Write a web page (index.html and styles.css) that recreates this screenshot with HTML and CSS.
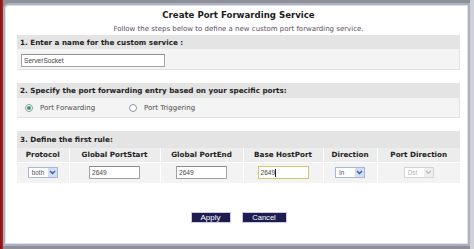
FILE: index.html
```html
<!DOCTYPE html>
<html lang="en">
<head>
    <meta charset="UTF-8">
    <title>Create Port Forwarding Service</title>
    <link rel="stylesheet" href="styles.css">
</head>
<body>
    <div class="panel">
        <h1 class="title">Create Port Forwarding Service</h1>
        <p class="intro">Follow the steps below to define a new custom port forwarding service.</p>

        <div class="step step1">
            <div class="step-head">1. Enter a name for the custom service :</div>
            <div class="step-body">
                <div class="field name-field">ServerSocket</div>
            </div>
        </div>

        <div class="step step2">
            <div class="step-head">2. Specify the port forwarding entry based on your specific ports:</div>
            <div class="step-body radios">
                <label class="radio"><span class="dot checked"></span>Port Forwarding</label>
                <label class="radio"><span class="dot"></span>Port Triggering</label>
            </div>
        </div>

        <div class="step step3">
            <div class="step-head">3. Define the first rule:</div>
            <table class="rules">
                <tr>
                    <th class="c1">Protocol</th>
                    <th class="c2">Global PortStart</th>
                    <th class="c3">Global PortEnd</th>
                    <th class="c4">Base HostPort</th>
                    <th class="c5">Direction</th>
                    <th class="c6">Port Direction</th>
                </tr>
                <tr>
                    <td><div class="sel"><span>both</span><i class="arr"><svg width="7" height="5" viewBox="0 0 7 5"><path d="M1 1 L3.5 3.5 L6 1" fill="none" stroke="#2a5fb0" stroke-width="1.4"/></svg></i></div></td>
                    <td><div class="field port">2649</div></td>
                    <td><div class="field port">2649</div></td>
                    <td><div class="field port focus">2649<span class="caret"></span></div></td>
                    <td><div class="sel"><span>In</span><i class="arr"><svg width="7" height="5" viewBox="0 0 7 5"><path d="M1 1 L3.5 3.5 L6 1" fill="none" stroke="#2a5fb0" stroke-width="1.4"/></svg></i></div></td>
                    <td><div class="sel off"><span>Dst</span><i class="arr"><svg width="7" height="5" viewBox="0 0 7 5"><path d="M1 1 L3.5 3.5 L6 1" fill="none" stroke="#b8b8b8" stroke-width="1.2"/></svg></i></div></td>
                </tr>
            </table>
        </div>

        <div class="actions">
            <button class="btn apply">Apply</button>
            <button class="btn cancel">Cancel</button>
        </div>
    </div>
</body>
</html>
```

FILE: styles.css
```css
*{box-sizing: border-box;}
html, body{
    margin: 0;
    padding: 0;
}
body{
    width: 474px;
    height: 249px;
    overflow: hidden;
    padding: 3px 4px 3px 3px;
    background: linear-gradient(to right, #7e1414 0, #b32222 3px, #8e9096 3px, #8e9096 470px, #cfd1d6 470px);
    font-family: "DejaVu Sans", Verdana, sans-serif;
    color: #333;
}
.panel{
    height: 243px;
    background: #fff;
    border: 2px solid #a9b2c4;
    border-radius: 6px 0 0 0;
    box-shadow: inset 0 0 0 1px #dde2ea;
    padding: 0 8px 0 12px;
}
.title{
    margin: 0;
    padding-top: 4px;
    height: 16px;
    line-height: 12px;
    font-size: 8.6px;
    font-weight: bold;
    text-align: center;
    color: #1c1c1c;
}
.intro{
    margin: 3px 0 0 0;
    height: 11px;
    line-height: 10px;
    font-size: 7px;
    text-align: center;
    color: #5d4b63;
}
.step-head{
    background: #e4e4e4;
    padding-left: 3px;
    font-size: 7.2px;
    font-weight: bold;
    color: #1e1e1e;
}
.step-body{
    background: #f4f4f4;
    border-right: 1px solid #e2e2e2;
    border-bottom: 1px solid #e2e2e2;
}
.step1 .step-head{
    height: 14px;
    line-height: 15px;
}
.step1 .step-body{
    height: 21px;
    padding: 5px 0 0 4px;
}
.step2{
    margin-top: 13px;
}
.step2 .step-head{
    height: 15px;
    line-height: 15px;
}
.step3{
    margin-top: 13px;
}
.step3 .step-head{
    height: 17px;
    line-height: 17px;
}

.field{
    background: #fff;
    border: 1px solid #a3a3a3;
    border-top-color: #8c8c8c;
    font-family: "Liberation Sans", Arial, sans-serif;
    font-size: 6.6px;
    color: #444;
    padding-left: 2px;
}
.name-field{
    width: 144px;
    height: 13px;
    line-height: 11px;
}

.radios{
    display: flex;
    align-items: center;
    height: 20px;
    padding-left: 8px;
}
.radio{
    display: flex;
    align-items: center;
    font-size: 7px;
    color: #4a4a4a;
}
.radio + .radio{
    margin-left: 34px;
}
.dot{
    width: 8px;
    height: 8px;
    border: 1px solid #8d98a4;
    border-radius: 50%;
    background: #fff;
    margin-right: 7px;
    display: flex;
    align-items: center;
    justify-content: center;
}
.dot.checked::after{
    content: "";
    width: 4px;
    height: 4px;
    border-radius: 50%;
    background: #3c9a63;
}

.rules{
    width: 443px;
    border-collapse: collapse;
    table-layout: fixed;
}
.rules th, .rules td{
    border: 1px solid #fff;
    text-align: center;
    padding: 0;
}
.rules tr:first-child th{border-top: none;}
.rules th:first-child, .rules td:first-child{border-left: none;}
.rules th:last-child, .rules td:last-child{border-right: none;}
.rules tr:last-child td{border-bottom: none;}
.rules th{
    height: 14px;
    background: #ececec;
    font-size: 7.2px;
    font-weight: bold;
    color: #222;
}
.rules td{
    height: 21px;
    background: #f3f3f3;
}
.c1{width: 52px;}
.c2{width: 91px;}
.c3{width: 83px;}
.c4{width: 80px;}
.c5{width: 54px;}
.c6{width: 83px;}

.port{
    width: 51px;
    height: 13px;
    line-height: 11px;
    margin: 0 auto;
    text-align: left;
}
.focus{
    border: 1px solid #d6c374;
    display: flex;
    align-items: center;
}
.caret{
    display: inline-block;
    width: 1px;
    height: 8px;
    background: #222;
}

.sel{
    width: 30px;
    height: 11px;
    margin: 0 auto;
    background: #fff;
    border: 1px solid #a8b8d0;
    display: flex;
    align-items: center;
    justify-content: space-between;
    font-family: "Liberation Sans", Arial, sans-serif;
    font-size: 6.4px;
    color: #555;
    padding-left: 3px;
}
.arr{
    width: 9px;
    height: 9px;
    background: #d3def2;
    display: flex;
    align-items: center;
    justify-content: center;
}
.sel.off{
    border-color: #d4d4d4;
    color: #b4b4b4;
}
.sel.off .arr{
    background: #efefef;
}

.actions{
    display: flex;
    justify-content: center;
    gap: 11px;
    margin-top: 29px;
}
.btn{
    height: 11px;
    padding: 0;
    background: #1d1d50;
    border: 1px solid #c9c9ec;
    color: #fff;
    font-family: "Liberation Sans", Arial, sans-serif;
    line-height: 9px;
}
.apply{
    width: 40px;
    font-size: 8px;
}
.cancel{
    width: 45px;
    font-size: 7.6px;
}
```
